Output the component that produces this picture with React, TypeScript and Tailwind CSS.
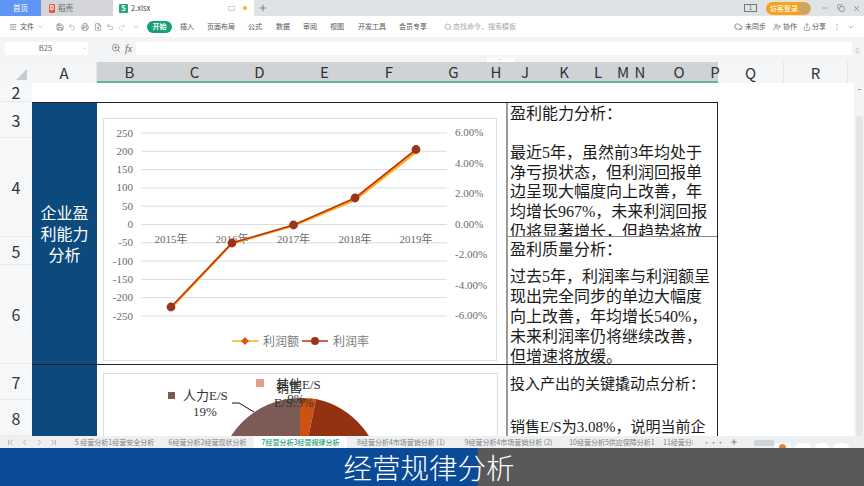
import {
  ChevronDown,
  ChevronFirst,
  ChevronLast,
  ChevronLeft,
  ChevronRight,
  ChevronsUpDown,
  Cloud,
  Copy,
  FileSearch,
  Menu,
  Minus,
  MoreVertical,
  Plus,
  Printer,
  Redo2,
  Save,
  Search,
  Share,
  Undo2,
  UserPlus,
  X,
  ZoomIn,
} from "lucide-react";

const ribbonTabs = [
  { label: "插入", w: "w-[14px]", ml: "ml-[8px]" },
  { label: "页面布局", w: "w-[27px]", ml: "ml-[13px]" },
  { label: "公式", w: "w-[14px]", ml: "ml-[14px]" },
  { label: "数据", w: "w-[14px]", ml: "ml-[14px]" },
  { label: "审阅", w: "w-[14px]", ml: "ml-[13px]" },
  { label: "视图", w: "w-[14px]", ml: "ml-[13px]" },
  { label: "开发工具", w: "w-[27px]", ml: "ml-[14px]" },
  { label: "会员专享", w: "w-[27px]", ml: "ml-[14px]" },
];

const columns = [
  { label: "A", w: "w-[65px]", selected: false },
  { label: "B", w: "w-[65px]", selected: true },
  { label: "C", w: "w-[65px]", selected: true },
  { label: "D", w: "w-[65px]", selected: true },
  { label: "E", w: "w-[65px]", selected: true },
  { label: "F", w: "w-[64px]", selected: true },
  { label: "G", w: "w-[65px]", selected: true },
  { label: "H", w: "w-[20px]", selected: true },
  { label: "J", w: "w-[38px]", selected: true },
  { label: "K", w: "w-[40px]", selected: true },
  { label: "L", w: "w-[28px]", selected: true },
  { label: "M", w: "w-[22px]", selected: true },
  { label: "N", w: "w-[12px]", selected: true },
  { label: "O", w: "w-[66px]", selected: true },
  { label: "P", w: "w-[6px]", selected: true },
  { label: "Q", w: "w-[66px]", selected: false },
  { label: "R", w: "w-[64px]", selected: false },
];

const rows = [
  { label: "2", h: "h-[19px]" },
  { label: "3", h: "h-[36px]" },
  { label: "4", h: "h-[99px]" },
  { label: "5", h: "h-[28px]" },
  { label: "6", h: "h-[99px]" },
  { label: "7", h: "h-[36px]" },
  { label: "8", h: "h-[36px]" },
];

const sheetTabs = [
  { label: "5 经营分析1经营安全分析", w: "w-[93px]" },
  { label: "6经营分析2经营现状分析", w: "w-[93px]" },
  { label: "7经营分析3经营规律分析", w: "w-[93px]", active: true },
  { label: "8经营分析4市场营销分析 (1)", w: "w-[108px]" },
  { label: "9经营分析4市场营销分析 (2)", w: "w-[107px]" },
  { label: "10经营分析5供应保障分析1", w: "w-[100px]" },
];

const leftAxis = [250, 200, 150, 100, 50, 0, -50, -100, -150, -200, -250];
const rightAxis = ["6.00%", "4.00%", "2.00%", "0.00%", "-2.00%", "-4.00%", "-6.00%"];
const years = ["2015年", "2016年", "2017年", "2018年", "2019年"];
const yearX = [171, 232, 293.5, 355, 416];
const amount = [[171, 308], [232, 243.5], [293.5, 225.5], [355, 200], [416, 152]];
const rate = [[171, 307], [232, 243], [293.5, 225], [355, 198], [416, 149.5]];

const serif = "font-['Liberation_Serif','Noto_Sans_CJK_SC',serif]";

function LineChart() {
  return (
    <svg width="392" height="241" viewBox="104 119 392 241" className={serif}>
      {leftAxis.map((v, i) => {
        const y = 133 + i * 18.3;
        return (
          <g key={v}>
            <line x1="141" x2="447" y1={y} y2={y} stroke="#dcdcdc" strokeWidth="1" />
            <text x="133" y={y + 3.5} textAnchor="end" fontSize="11" fill="#6b6b6b">
              {v}
            </text>
          </g>
        );
      })}
      {rightAxis.map((v, i) => (
        <text key={v} x="455" y={136 + i * 30.5} fontSize="11" fill="#6b6b6b">
          {v}
        </text>
      ))}
      {years.map((v, i) => (
        <text key={v} x={yearX[i]} y="243" textAnchor="middle" fontSize="11" fill="#6b6b6b">
          {v}
        </text>
      ))}
      <polyline
        points={amount.map((p) => p.join(",")).join(" ")}
        fill="none"
        stroke="#f5b21a"
        strokeWidth="2.5"
      />
      <polyline
        points={rate.map((p) => p.join(",")).join(" ")}
        fill="none"
        stroke="#c5300f"
        strokeWidth="1.6"
      />
      {rate.map((p) => (
        <circle key={p[0]} cx={p[0]} cy={p[1]} r="4.4" fill="#99351c" />
      ))}
      <line x1="232" x2="259" y1="341" y2="341" stroke="#f5b21a" strokeWidth="1.5" />
      <path d="M245 337 L249 341 L245 345 L241 341 Z" fill="#d4561a" />
      <text x="263" y="345.5" fontSize="12" fill="#7a7a7a">
        利润额
      </text>
      <line x1="302" x2="328" y1="341" y2="341" stroke="#c5300f" strokeWidth="1.5" />
      <circle cx="315" cy="341" r="4" fill="#99351c" />
      <text x="333" y="345.5" fontSize="12" fill="#7a7a7a">
        利润率
      </text>
    </svg>
  );
}

function PieChart() {
  return (
    <svg width="393" height="100" viewBox="104 374 393 100" className={serif}>
      <path d="M300 479 L218.6 479 A81.4 81.4 0 0 1 300 398 Z" fill="#7c5b56" />
      <path d="M300 479 L300 398 A81.4 81.4 0 0 1 316 399 Z" fill="#cb5211" />
      <path d="M300 479 L316 399 A81.4 81.4 0 0 1 381 479 Z" fill="#933113" />
      <polyline points="232,403 239,403 254,412" fill="none" stroke="#111" strokeWidth="1" />
      <rect x="168" y="392" width="7" height="7" fill="#7c5b56" />
      <text x="183" y="400" fontSize="13" fill="#333">
        人力E/S
      </text>
      <text x="205" y="416" textAnchor="middle" fontSize="13" fill="#333">
        19%
      </text>
      <rect x="256" y="379" width="8" height="8" fill="#e59c8c" />
      <text x="276" y="389" fontSize="13" fill="#333">
        其他E/S
      </text>
      <text x="276" y="392" fontSize="13" fill="#333">
        销售
      </text>
      <text x="296" y="403" textAnchor="middle" fontSize="13" fill="#333">
        9%
      </text>
      <text x="274" y="407" fontSize="13" fill="#333">
        E/S:3%
      </text>
    </svg>
  );
}

export default function App() {
  return (
    <div className="flex h-[486px] w-[864px] flex-col overflow-hidden bg-white font-['Noto_Sans_CJK_SC','Noto_Sans',sans-serif]">
      {/* title bar */}
      <div className="flex h-[16px] items-center bg-[#e0e3e6] text-[7.5px]">
        <div className="flex h-full w-[41px] items-center justify-center bg-[#5f95f4] text-white">首页</div>
        <div className="flex h-full w-[72px] items-center gap-[3px] bg-[#d3d5d8] pl-[8px] text-[#666]">
          <span className="flex h-[9px] w-[6px] items-center justify-center rounded-[1px] bg-[#e8563f] text-[6px] font-bold leading-none text-white">
            D
          </span>
          稻壳
        </div>
        <div className="flex h-full w-[141px] items-center bg-white pl-[6px] text-[#444]">
          <span className="mr-[3px] flex h-[9px] w-[9px] items-center justify-center rounded-[1px] bg-[#2ba57f] text-[7px] font-bold leading-none text-white">
            S
          </span>
          2.xlsx
          <span className="ml-auto mr-[7px] flex items-center gap-[8px]">
            <span className="h-[5px] w-[7px] rounded-[1px] border border-[#ccc]" />
            <span className="h-[4px] w-[4px] rounded-full bg-[#f0b429]" />
          </span>
        </div>
        <Plus size={10} strokeWidth={1.5} className="ml-[4px] text-[#555]" />
        <div className="ml-auto flex items-center">
          <span className="mr-[9px] flex h-[8px] w-[13px] items-center justify-center border border-[#777] text-[6px] leading-none text-[#666]">
            1
          </span>
          <div className="flex h-[13px] w-[45px] items-center justify-between rounded-full bg-[#f5a31f] pl-[4px] pr-[1px] text-[7px] text-white">
            访客登录
            <span className="h-[11px] w-[11px] rounded-full bg-[#c9a56f]" />
          </div>
          <Minus size={8} className="ml-[10px] text-[#888]" />
          <Copy size={8} className="ml-[8px] text-[#777]" />
          <X size={9} className="ml-[7px] mr-[3px] text-[#777]" />
        </div>
      </div>

      {/* ribbon */}
      <div className="flex h-[21px] items-center bg-white pl-[9px] text-[7px] text-[#555]">
        <Menu size={8} className="text-[#666]" />
        <span className="ml-[3px]">文件</span>
        <ChevronDown size={7} className="ml-[3px] text-[#999]" />
        <Save size={8} className="ml-[12px] text-[#666]" />
        <Undo2 size={8} className="ml-[4px] text-[#aaa]" />
        <Printer size={8} className="ml-[5px] text-[#777]" />
        <FileSearch size={8} className="ml-[5px] text-[#888]" />
        <Undo2 size={8} className="ml-[4px] text-[#999]" />
        <Redo2 size={8} className="ml-[4px] text-[#ccc]" />
        <ChevronDown size={6} className="ml-[7px] text-[#777]" />
        <span className="ml-[8px] flex h-[12px] w-[25px] items-center justify-center rounded-full bg-[#17a078] text-[7px] font-bold text-white">
          开始
        </span>
        {ribbonTabs.map((t) => (
          <span key={t.label} className={`${t.w} ${t.ml} whitespace-nowrap`}>
            {t.label}
          </span>
        ))}
        <Search size={8} className="ml-[18px] text-[#999]" />
        <span className="ml-[1px] whitespace-nowrap text-[#aaa]">查找命令、搜索模板</span>
        <Cloud size={9} className="ml-[218px] text-[#666]" />
        <span className="ml-[2px] whitespace-nowrap">未同步</span>
        <UserPlus size={8} className="ml-[7px] text-[#777]" />
        <span className="ml-[2px] whitespace-nowrap">协作</span>
        <Share size={8} className="ml-[6px] text-[#777]" />
        <span className="ml-[1px] whitespace-nowrap">分享</span>
        <MoreVertical size={8} className="ml-[7px] text-[#bbb]" />
        <ChevronDown size={8} className="ml-[6px] text-[#888]" />
      </div>

      {/* formula bar */}
      <div className="relative flex h-[25px] items-center bg-[#f3f4f6] pb-[5px] pl-[5px] pr-[12px] pt-[2px]">
        <div className="flex h-[13px] w-[83px] items-center rounded-[1px] bg-white text-[7.5px] text-[#666]">
          <span className="flex-1 pl-[4px] text-center">B25</span>
          <ChevronDown size={5} className="mr-[1px] text-[#888]" />
        </div>
        <ZoomIn size={10} strokeWidth={1.5} className="ml-[23px] text-[#666]" />
        <span className="ml-[4px] font-['Liberation_Serif',serif] text-[10px] italic text-[#666]">fx</span>
        <div className="ml-[4px] h-[13px] flex-1 bg-white" />
        <ChevronsUpDown size={7} className="absolute right-[3px] top-[10px] text-[#888]" />
        <div className="absolute bottom-0 left-[487px] flex h-[5px] w-[27px] items-center justify-center bg-white">
          <ChevronDown size={5} className="text-[#888]" />
        </div>
      </div>

      {/* column headers */}
      <div className="flex h-[21px] bg-[#f5f6f7]">
        <div className="flex w-[32px] items-end justify-end pb-[3px] pr-[5px]">
          <span className="h-[11px] w-[11px] bg-[#c8cbce] [clip-path:polygon(100%_0,100%_100%,0_100%)]" />
        </div>
        {columns.map((c) => (
          <div
            key={c.label}
            className={`${c.w} flex items-center justify-center whitespace-nowrap text-[15px] leading-none text-[#333] ${
              c.selected ? "border-b-2 border-[#5fb5a2] bg-[#cfd3d6]" : "border-r border-[#e4e6e8]"
            }`}
          >
            {c.label}
          </div>
        ))}
        <div className="flex-1 bg-[#f3f4f5]" />
      </div>

      {/* sheet */}
      <div className="flex h-[353px] overflow-hidden">
        <div className="flex w-[32px] flex-col bg-[#f5f7f9]">
          {rows.map((r) => (
            <div
              key={r.label}
              className={`${r.h} flex shrink-0 items-center justify-center border-b border-[#e6e8ea] text-[16px] leading-none text-[#333]`}
            >
              {r.label}
            </div>
          ))}
        </div>

        <div className={`flex w-[686px] flex-col pt-[19px] ${serif}`}>
          <div className="flex h-[263px] shrink-0 border-b border-t border-[#222]">
            <div className="flex w-[65px] items-center justify-center bg-[#0c4a7e] pt-[1px] text-center text-[16px] leading-[21px] text-white">
              <div>
                企业盈
                <br />
                利能力
                <br />
                分析
              </div>
            </div>
            <div className="w-[409px] pl-[6px] pt-[15px]">
              <div className="h-[243px] w-[394px] border border-[#dedede]">
                <LineChart />
              </div>
            </div>
            <div className="flex w-[212px] flex-col border-l-2 border-r border-l-[#9a9a9a] border-r-[#222] text-[16px] text-[#1a1a1a]">
              <div className="h-[134px] overflow-hidden border-b border-[#888] pl-[2px] pt-[1px] leading-[19.6px]">
                <div className="whitespace-nowrap">盈利能力分析：</div>
                <div className="h-[19.6px]" />
                <div className="whitespace-nowrap">最近5年，虽然前3年均处于</div>
                <div className="whitespace-nowrap">净亏损状态，但利润回报单</div>
                <div className="whitespace-nowrap">边呈现大幅度向上改善，年</div>
                <div className="whitespace-nowrap">均增长967%，未来利润回报</div>
                <div className="whitespace-nowrap">仍将显著增长，但趋势将放</div>
              </div>
              <div className="flex-1 overflow-hidden pl-[2px] pt-[3px] leading-[20px]">
                <div className="mb-[7px] whitespace-nowrap">盈利质量分析：</div>
                <div className="whitespace-nowrap">过去5年，利润率与利润额呈</div>
                <div className="whitespace-nowrap">现出完全同步的单边大幅度</div>
                <div className="whitespace-nowrap">向上改善，年均增长540%，</div>
                <div className="whitespace-nowrap">未来利润率仍将继续改善，</div>
                <div className="whitespace-nowrap">但增速将放缓。</div>
              </div>
            </div>
          </div>
          <div className="flex flex-1 overflow-hidden">
            <div className="w-[65px] bg-[#0c4a7e]" />
            <div className="w-[409px] pl-[6px] pt-[8px]">
              <div className="h-[100px] w-[395px] border border-[#dedede]">
                <PieChart />
              </div>
            </div>
            <div className="w-[212px] border-l-2 border-r border-l-[#9a9a9a] border-r-[#222] pl-[2px] pt-[9px] text-[15px] leading-[21.5px] text-[#1a1a1a]">
              <div className="whitespace-nowrap">投入产出的关键撬动点分析：</div>
              <div className="h-[21.5px]" />
              <div className="whitespace-nowrap">销售E/S为3.08%，说明当前企</div>
            </div>
          </div>
        </div>

        <div className="flex-1" />
        <div className="flex w-[10px] flex-col items-center bg-[#f3f4f5] pt-[6px]">
          <div className="h-[1px] w-[3px] bg-[#999]" />
          <div className="mt-[26px] h-[330px] w-[7px] rounded-[2px] bg-[#e3e5e7]" />
        </div>
      </div>

      {/* sheet tabs */}
      <div className="flex h-[12px] items-center bg-[#edeff1] text-[7px] text-[#808080]">
        <div className="flex w-[61px] items-center justify-between pl-[6px] pr-[3px]">
          <ChevronFirst size={9} strokeWidth={1.5} />
          <ChevronLeft size={9} strokeWidth={1.5} />
          <ChevronRight size={9} strokeWidth={1.5} />
          <ChevronLast size={9} strokeWidth={1.5} />
        </div>
        <div className="w-[7px]" />
        {sheetTabs.map((t) => (
          <div
            key={t.label}
            className={`${t.w} flex h-full shrink-0 items-center justify-center whitespace-nowrap ${
              t.active ? "bg-white font-medium text-[#1c9c78]" : ""
            }`}
          >
            {t.label}
          </div>
        ))}
        <span className="ml-[1px] w-[30px] overflow-hidden whitespace-nowrap">11经营分析</span>
        <span className="ml-[10px] text-[#777]">···</span>
        <Plus size={8} className="ml-[6px] text-[#555]" />
        <div className="ml-[16px] flex h-full flex-1 items-end">
          <div className="mb-[2px] h-[6px] w-[20px] rounded-l-[1px] bg-[#cfd4da]" />
          <div className="relative h-[5px] w-[17px] rounded-t-full bg-white">
            <span className="absolute left-[5px] top-[1px] h-[4px] w-[7px] rounded-t-full bg-[#e8813a]" />
          </div>
          <div className="ml-[4px] h-[5px] w-[16px] rounded-t-full bg-white" />
          <div className="ml-[4px] h-[5px] w-[14px] rounded-t-full bg-white" />
          <div className="ml-[4px] h-[5px] w-[16px] rounded-t-full bg-white" />
        </div>
      </div>

      {/* caption */}
      <div className="flex flex-1 items-center justify-center bg-[linear-gradient(90deg,#0b4a96_478px,#595959_478px)] pr-[6px] text-[28.5px] font-light leading-none text-white">
        经营规律分析
      </div>
    </div>
  );
}
